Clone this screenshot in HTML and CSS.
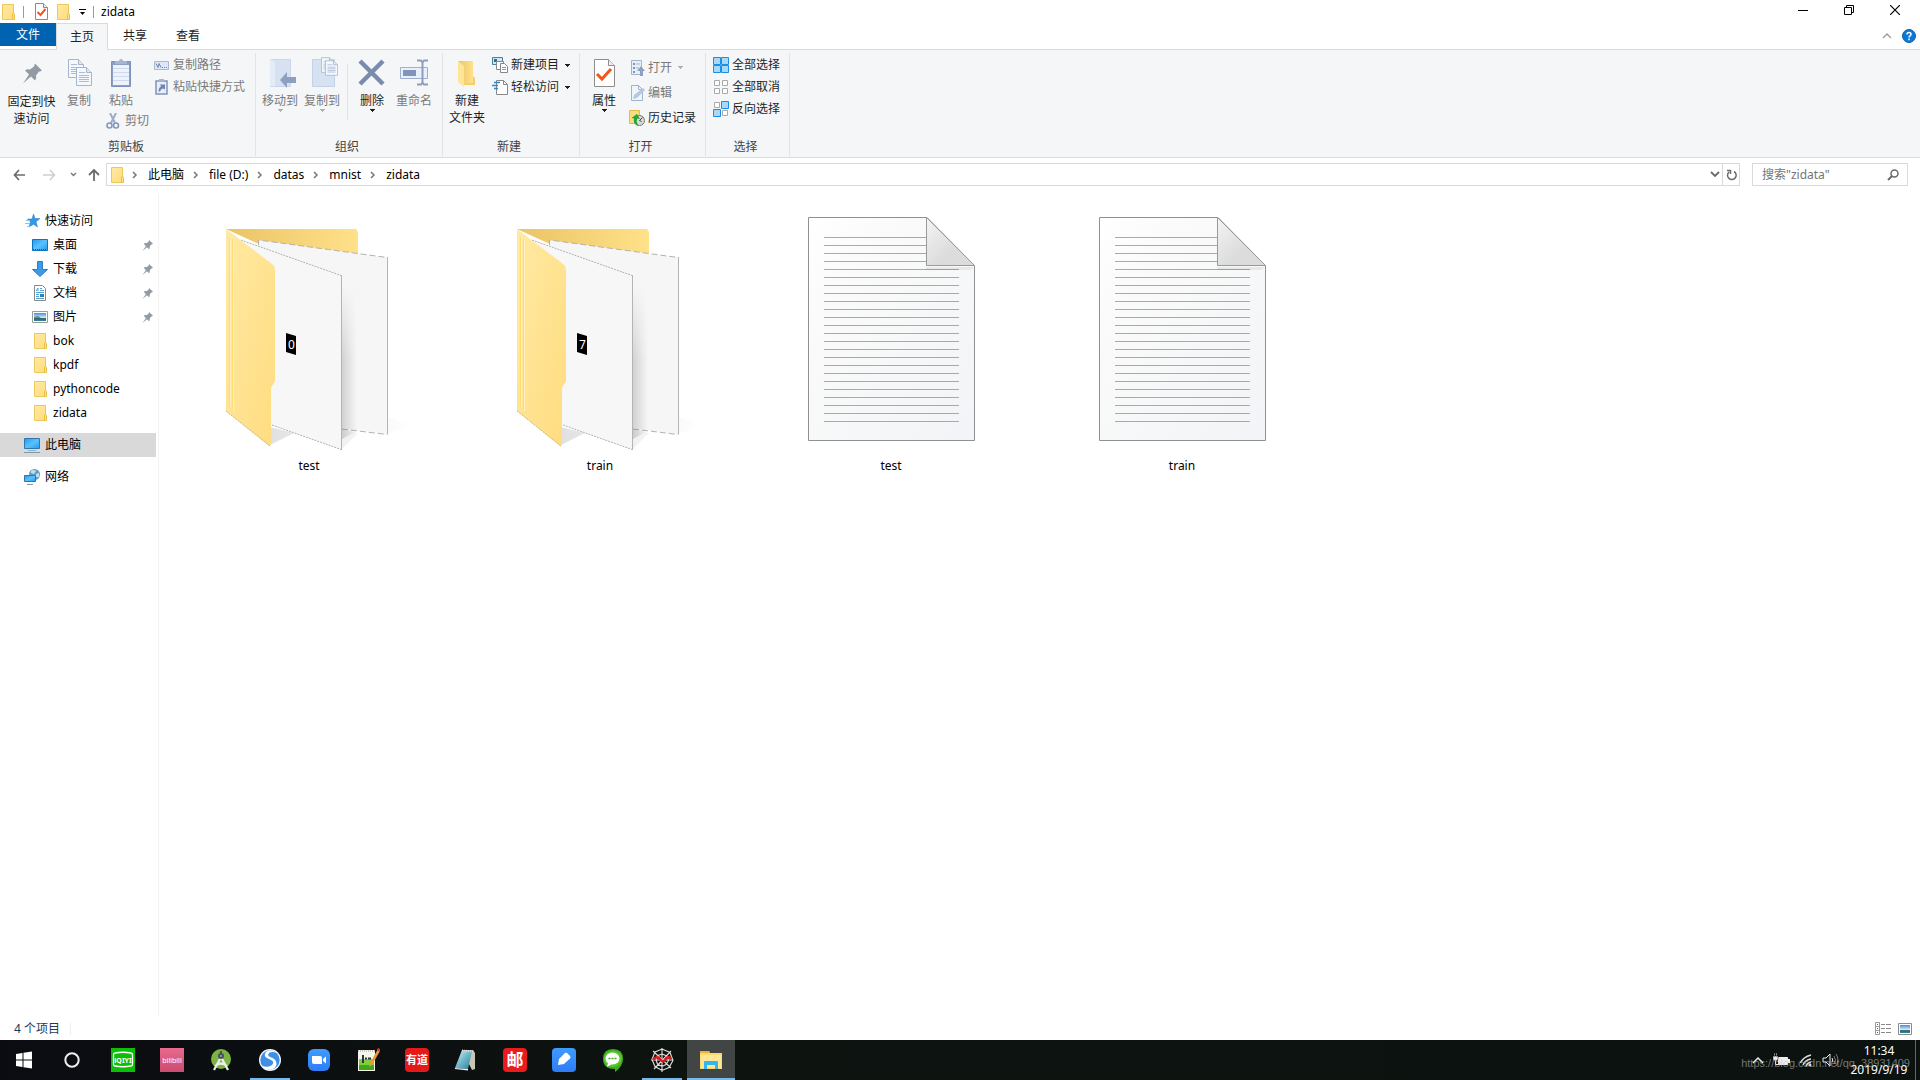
FILE: index.html
```html
<!DOCTYPE html>
<html lang="zh-CN">
    <head>
        <meta charset="utf-8">
        <title>zidata</title>
        <link rel="stylesheet" href="styles.css">
    </head>
    <body>

        <!--Shared icons-->
        <svg class="defs" width="0" height="0">
            <defs>
                <linearGradient id="gFolder" x1="0" y1="0" x2="1" y2="1"><stop offset="0" stop-color="#ffe9a3"/><stop offset="1" stop-color="#ffdd80"/></linearGradient>
                <linearGradient id="gBack" x1="0" y1="0" x2="1" y2="0"><stop offset="0" stop-color="#eac465"/><stop offset="1" stop-color="#ffe18a"/></linearGradient>
                <linearGradient id="gDoc" x1="0" y1="0" x2="1" y2="1"><stop offset="0" stop-color="#ffffff"/><stop offset="0.3" stop-color="#f9faf9"/><stop offset="1" stop-color="#f3f4f7"/></linearGradient>
                <linearGradient id="gFold" x1="0" y1="0" x2="1" y2="1"><stop offset="0" stop-color="#f4f4f4"/><stop offset="0.6" stop-color="#dcdcdc"/></linearGradient>
                <linearGradient id="gShade" x1="0" y1="0" x2="1" y2="0"><stop offset="0" stop-color="#000" stop-opacity="0.15"/><stop offset="1" stop-color="#000" stop-opacity="0"/></linearGradient>
                <linearGradient id="gShadeDown" x1="0" y1="0" x2="0" y2="1"><stop offset="0" stop-color="#f6f6f6"/><stop offset="1" stop-color="#f6f6f6" stop-opacity="0"/></linearGradient>
                <linearGradient id="gFloor" x1="0" y1="0" x2="1" y2="0"><stop offset="0" stop-color="#000" stop-opacity="0.12"/><stop offset="1" stop-color="#000" stop-opacity="0"/></linearGradient>
                <linearGradient id="gBlue" x1="0" y1="0" x2="1" y2="1"><stop offset="0" stop-color="#1e9bf5"/><stop offset="0.5" stop-color="#5cc1fb"/><stop offset="1" stop-color="#1e9bf5"/></linearGradient>
                <linearGradient id="gPic" x1="0" y1="0" x2="0" y2="1"><stop offset="0" stop-color="#4b8bdc"/><stop offset="0.6" stop-color="#d5eefa"/><stop offset="0.7" stop-color="#2c5f66"/><stop offset="1" stop-color="#3c8aa0"/></linearGradient>
                <linearGradient id="gBili" x1="0" y1="0" x2="0" y2="1"><stop offset="0" stop-color="#e86a8c"/><stop offset="1" stop-color="#cc4b70"/></linearGradient>
                <linearGradient id="gApp" x1="0" y1="0" x2="0" y2="1"><stop offset="0" stop-color="#3f9bff"/><stop offset="1" stop-color="#2f7cf6"/></linearGradient>
                <linearGradient id="gNote" x1="0" y1="0" x2="1" y2="1"><stop offset="0" stop-color="#e3f6fa"/><stop offset="0.5" stop-color="#6fb8cc"/><stop offset="1" stop-color="#2c7c94"/></linearGradient>
                <pattern id="ruled" x="0" y="36" width="8" height="8" patternUnits="userSpaceOnUse"><rect width="8" height="1" fill="#a9a9a9"/></pattern>

                <symbol id="folder" viewBox="0 0 16 16">
                    <path d="M1.5 0.5h11v15h-11z" fill="url(#gFolder)" stroke="#ecc858"/>
                    <path d="M11.5 10.5q0-1 1-1t1 1v5h-2z" fill="#ffe28d" stroke="#e9bf45"/>
                </symbol>
                <symbol id="checkdoc" viewBox="0 0 13 17">
                    <path d="M0.5 0.5h8l4 4v12h-12z" fill="#fff" stroke="#8a8a8a"/><path d="M8.5 0.5v4h4" fill="#eee" stroke="#8a8a8a"/>
                    <path d="M2.5 9l3 3 5-6" fill="none" stroke="#f0581b" stroke-width="2"/>
                </symbol>
                <symbol id="pin" viewBox="0 0 20 20">
                    <path d="M13 0l7 7-2 1-1 0-3 4q1 3-1 5l-4-4-8 7 6-9-4-4q2-2 5-1l4-3z" fill="#929ba3"/>
                </symbol>
                <symbol id="caret" viewBox="0 0 5 3"><path d="M0 0h5v1h-1v1h-1v1h-1v-1h-1v-1h-1z" fill="currentColor"/></symbol>
                <symbol id="chev" viewBox="0 0 6 8"><path d="M1 1l3 3-3 3" fill="none" stroke="#777" stroke-width="1.5"/></symbol>
                <symbol id="page" viewBox="0 0 16 19">
                    <path d="M0.5 0.5h10l5 5v13h-15z" fill="#f4f8fd" stroke="#a5b5cd"/><path d="M10.5 0.5v5h5" fill="#dce6f3" stroke="#a5b5cd"/>
                    <path d="M3 5.5h6M3 8.5h10M3 10.5h10M3 12.5h10M3 14.5h10" stroke="#a9bddb"/>
                </symbol>
                <symbol id="bigFolder" viewBox="0 0 256 256">
                    <path d="M206 216l24 8-24 9zM89 226l24 6-24 12zM161 228l16 4-16 16z" fill="url(#gFloor)"/>
                    <path d="M45 28h130l2 3v30h-60z" fill="url(#gBack)"/>
                    <path d="M77 39L206.5 56.5v177L161 227 77 215z" fill="#f6f6f6"/>
                    <path d="M77.5 44v-5L206 56.5M161 228l45 5.5" fill="none" stroke="#b2b2b2" stroke-dasharray="6 3"/>
                    <path d="M206.5 56v177.5" stroke="#b4b4b4"/>
                    <path d="M161 85l15 3v142l-15 8z" fill="url(#gShade)"/>
                    <path d="M161 85h16v75h-16z" fill="url(#gShadeDown)"/>
                    <path d="M60 39l100.500 35.500v174L91 224 60 200z" fill="#f7f7f7"/>
                    <path d="M60 39l100 35.500M91 224l69 24.500" fill="none" stroke="#b2b2b2" stroke-dasharray="2 1"/>
                    <path d="M160.5 74v175" stroke="#b4b4b4"/>
                    <path d="M45 28l46 35q3 2 3 6v111l-4 7v55q0 3-2 3L45 210z" fill="url(#gFolder)"/>
                    <path d="M48.5 36v170M51.5 38v171" stroke="#ffdc73"/><path d="M49.5 36v171M52.5 39v171" stroke="#fff0bd"/>
                    <path d="M45 210l44 35" stroke="#c9b98d" stroke-dasharray="2 1"/>
                    <path d="M105 132l10 3v19l-10-3z" fill="#000"/>
                </symbol>
                <symbol id="bigDoc" viewBox="0 0 256 256">
                    <path d="M45.5 16.5H164L211.5 64.5v175h-166z" fill="url(#gDoc)" stroke="#909090"/>
                    <path d="M61 36h103v30h32v155H61z" fill="url(#ruled)"/>
                    <path d="M163 66h48l-3 3h-45z" fill="#000" opacity="0.06"/>
                    <path d="M163.5 16.5v48h48z" fill="url(#gFold)" stroke="#9a9a9a"/>
                </symbol>
                <symbol id="picture" viewBox="0 0 16 12">
                    <path d="M0.5 0.5h15v11h-15z" fill="#fff" stroke="#9b9b9b"/><path d="M2 2h12v8h-12z" fill="url(#gPic)"/><path d="M2 6l4-1 3 2 5 0v1H2z" fill="#2f6b62" opacity="0.7"/>
                </symbol>
                <symbol id="monitor" viewBox="0 0 16 16">
                    <path d="M0.5 1.5h15v10h-15z" fill="url(#gBlue)" stroke="#2d79ae"/><path d="M4 13.5h8" stroke="#9fb4c2"/><path d="M0 15.5h16" stroke="#7d98aa"/>
                </symbol>
            </defs>
        </svg>

        <div class="window">

        <!--Title bar-->
        <header class="titlebar">
            <svg class="i16" viewBox="0 0 16 16"><use href="#folder"/></svg>
            <span class="bar"></span>
            <button class="plain" aria-label="属性"><svg width="13" height="17"><use href="#checkdoc"/></svg></button>
            <button class="plain quick" aria-label="新建文件夹"><svg class="i16"><use href="#folder"/></svg></button>
            <button class="plain" aria-label="自定义"><svg width="9" height="6" viewBox="0 0 9 6"><path d="M1 0.5h7" stroke="#000"/><path d="M2 3h5l-2.5 3z"/></svg></button>
            <span class="bar last"></span>
            <span class="title">zidata</span>
            <div class="winbtns">
                <button class="plain" aria-label="最小化"><svg width="10" height="10"><path d="M0 5.5h10" stroke="#000"/></svg></button>
                <button class="plain" aria-label="还原"><svg width="10" height="10"><path d="M0.5 2.5h7v7h-7zM2.5 2.5v-2h7v7h-2" fill="none" stroke="#000"/></svg></button>
                <button class="plain" aria-label="关闭"><svg width="10" height="10"><path d="M0 0l10 10M10 0L0 10" stroke="#000" stroke-width="1.2"/></svg></button>
            </div>
        </header>

        <!--Tabs-->
        <nav class="tabs">
            <button class="tab file">文件</button>
            <button class="tab active">主页</button>
            <button class="tab">共享</button>
            <button class="tab">查看</button>
            <div class="help">
                <button class="plain" aria-label="收起"><svg width="10" height="6"><path d="M1 5l4-4 4 4" fill="none" stroke="#999" stroke-width="1.3"/></svg></button>
                <button class="plain" aria-label="帮助"><svg width="14" height="14" viewBox="0 0 14 14"><circle cx="7" cy="7" r="6.5" fill="#0a78d7" stroke="#1560a8"/><path d="M5 5.5q0-2 2-2t2 1.8q0 1-1 1.5t-1 1.7M7 9.6v1.6" fill="none" stroke="#fff" stroke-width="1.5"/></svg></button>
            </div>
        </nav>

        <!--Ribbon-->
        <section class="ribbon">
            <div class="group clip">
                <div class="tools">
                    <button class="big wide"><svg viewBox="0 0 32 32"><use href="#pin" x="6" y="5" width="20" height="21"/></svg>固定到快<br>速访问</button>
                    <button class="big" disabled><svg viewBox="0 0 32 32"><use href="#page" x="5" y="2" width="16" height="19"/><use href="#page" x="13" y="10" width="16" height="19"/></svg>复制</button>
                    <div class="stack">
                        <button class="big" disabled><svg viewBox="0 0 32 32"><path d="M6.5 4.5h19v25h-19z" fill="#8b9fc5" stroke="#7d92ba"/><path d="M8 8h16v20H8z" fill="#eef3fb"/><path d="M8 11.5h16M8 15.5h16M8 19.5h16M8 23.5h16" stroke="#cfdaec"/><path d="M10 7V4h4q0-2 2-2t2 2h4v3z" fill="#a6b5d1"/></svg>粘贴</button>
                        <button class="small" disabled><svg class="i16" viewBox="0 0 16 16"><path d="M4 0l5 10M10 0L5 10" stroke="#9dadc8" stroke-width="2" fill="none"/><circle cx="3.5" cy="12.5" r="2.5" fill="none" stroke="#8498bd" stroke-width="1.6"/><circle cx="10" cy="12.5" r="2.5" fill="none" stroke="#8498bd" stroke-width="1.6"/></svg>剪切</button>
                    </div>
                    <div class="list">
                        <button class="small" disabled><svg class="i16" viewBox="0 0 16 16"><path d="M0.5 4.5h14v8h-14z" fill="#dde7f5" stroke="#a9b9d2"/><path d="M2 6.5l2 4 1-4 2 4M8 10.5h1M10 10.5h1M12 10.5h1" fill="none" stroke="#6f86b0"/></svg>复制路径</button>
                        <button class="small" disabled><svg class="i16" viewBox="0 0 16 16"><path d="M2 2h11v13H2z" fill="#e8eef8" stroke="#7f94bb" stroke-width="1.5"/><path d="M5 3V0h5v3z" fill="#a6b5d1"/><path d="M4.500 12.500q0-4 2.500-5l-1-2h5v5l-2-1q-2 0-3 3z" fill="#6f86b0"/></svg>粘贴快捷方式</button>
                    </div>
                </div>
                <div class="caption">剪贴板</div>
            </div>

            <div class="group">
                <div class="tools">
                    <button class="big" disabled><svg viewBox="0 0 32 32"><path d="M6.5 2.5h20v27h-20z" fill="#d6e1f1" stroke="#cbd7e9"/><path d="M6 2l5 3v24H6z" fill="#e4ecf7"/><path d="M16 23l7-8v5h9v6h-9v5z" fill="#8ea0c0"/></svg>移动到<svg class="drop"><use href="#caret"/></svg></button>
                    <button class="big" disabled><svg viewBox="0 0 32 32"><path d="M6.5 2.5h22v27h-22z" fill="#d6e1f1" stroke="#c5d2e6"/><use href="#page" x="15" y="0" width="13" height="16"/><use href="#page" x="19" y="3" width="13" height="16"/></svg>复制到<svg class="drop"><use href="#caret"/></svg></button>
                    <span class="split"></span>
                    <button class="big"><svg viewBox="0 0 32 32"><path d="M4 4l23 23M27 4L4 27" stroke="#7a8cae" stroke-width="4.5"/></svg>删除<svg class="drop"><use href="#caret"/></svg></button>
                    <button class="big" disabled><svg viewBox="0 0 32 32"><path d="M2.5 10.5h27v11h-27z" fill="#eaf0f9" stroke="#9db0cf"/><path d="M5 13h13v6H5z" fill="#8094b9"/><path d="M19 3.500h4l1.500 2v20l-1.500 2h-4M30 3.500h-4l-1.500 2v20l1.500 2h4" fill="none" stroke="#8b9dbe" stroke-width="2"/></svg>重命名</button>
                </div>
                <div class="caption">组织</div>
            </div>

            <div class="group">
                <div class="tools">
                    <button class="big"><svg viewBox="0 0 32 32"><path d="M7 4h15v15l2 2v7H12z" fill="#f3cf6a"/><path d="M7 4h15v22l-10 1z" fill="url(#gBack)"/><path d="M7 4l6 5v21l-6-5z" fill="#ffe598"/></svg>新建<br>文件夹</button>
                    <div class="list">
                        <button class="small"><svg class="i16" viewBox="0 0 16 16"><path d="M0.5 0.5h10v7h-10z" fill="#cfe6f5" stroke="#4c7f9e"/><path d="M2 2h3v3H2z" fill="#2d6f97"/><path d="M4.5 4.5h7v8h-7z" fill="#fff" stroke="#888"/><path d="M8.5 6.5h4l3 3v6h-7z" fill="#fff" stroke="#888"/><path d="M10 10.5h4M10 12.5h4" stroke="#d87a7a"/></svg>新建项目<svg class="drop after"><use href="#caret"/></svg></button>
                        <button class="small"><svg class="i16" viewBox="0 0 16 16"><path d="M4.5 1.500h7l4 4v10h-11z" fill="#fff" stroke="#888"/><path d="M11.5 1.500v4h4" fill="none" stroke="#888"/><path d="M2 3.500h6M0 6.500h6M2 9.500h4" stroke="#2f86c8" stroke-width="1.5"/></svg>轻松访问<svg class="drop after"><use href="#caret"/></svg></button>
                    </div>
                </div>
                <div class="caption">新建</div>
            </div>

            <div class="group">
                <div class="tools">
                    <button class="big"><svg viewBox="0 0 32 32"><path d="M6.5 2.5h14l6 6v21h-20z" fill="#fff" stroke="#8d8d8d"/><path d="M20.5 2.5v6h6" fill="#eee" stroke="#8d8d8d"/><path d="M9 17l5 5 9-10" fill="none" stroke="#f0581b" stroke-width="3"/></svg>属性<svg class="drop"><use href="#caret"/></svg></button>
                    <div class="list loose">
                        <button class="small" disabled><svg class="i16" viewBox="0 0 16 16"><path d="M2.5 0.5h10v14h-10z" fill="#e8eff8" stroke="#a3b3cc"/><path d="M4 3h2v2H4zM4 7h2v2H4zM4 11h2v2H4z" fill="#7f95bb"/><path d="M7 4h4M7 8h3" stroke="#a3b3cc"/><path d="M11 16v-5H8l4-5 4 5h-2v5z" fill="#8ea0c0"/></svg>打开<svg class="drop after"><use href="#caret"/></svg></button>
                        <button class="small" disabled><svg class="i16" viewBox="0 0 16 16"><path d="M2.5 0.5h7l4 4v11h-11z" fill="#f0f5fb" stroke="#a3b3cc"/><path d="M9.5 0.5v4h4" fill="none" stroke="#a3b3cc"/><path d="M4 14l1-4 9-7 2 2-8 8z" fill="#b6c7e0"/></svg>编辑</button>
                        <button class="small"><svg class="i16" viewBox="0 0 16 16"><path d="M0.500 0.500h10v13h-10z" fill="#fbdc7c" stroke="#e3bb4c"/><circle cx="10.5" cy="10.5" r="5" fill="#d9d9d9" stroke="#777"/><path d="M10.500 10.500l3-3M10.500 10.500l2 1" fill="none" stroke="#444"/><path d="M8 15.500q-4-2-3-7L2.500 8 8 4l3 5-2.500-.5q-2 3 1 7z" fill="#27a536"/></svg>历史记录</button>
                    </div>
                </div>
                <div class="caption">打开</div>
            </div>

            <div class="group">
                <div class="tools">
                    <div class="list">
                        <button class="small"><svg class="i16" viewBox="0 0 16 16"><path d="M0.5 0.5h7v7h-7zM8.5 0.5h7v7h-7zM0.5 8.5h7v7h-7zM8.5 8.5h7v7h-7z" fill="#a8d8f8" stroke="#1e8fe0"/></svg>全部选择</button>
                        <button class="small"><svg class="i16" viewBox="0 0 16 16"><path d="M1.5 1.5h5v5h-5zM9.5 1.5h5v5h-5zM1.5 9.5h5v5h-5zM9.5 9.5h5v5h-5z" fill="#fff" stroke="#aaa"/></svg>全部取消</button>
                        <button class="small"><svg class="i16" viewBox="0 0 16 16"><path d="M1.5 1.5h5v5h-5zM9.5 9.5h5v5h-5z" fill="#fff" stroke="#aaa"/><path d="M8.5 0.5h7v7h-7zM0.5 8.5h7v7h-7z" fill="#a8d8f8" stroke="#1e8fe0"/></svg>反向选择</button>
                    </div>
                </div>
                <div class="caption">选择</div>
            </div>
        </section>

        <!--Address row-->
        <div class="address">
            <button class="plain arrow" aria-label="后退"><svg width="13" height="12"><path d="M12 6H1.5M6 1L1.5 6 6 11" fill="none" stroke="#6b6b6b" stroke-width="1.7"/></svg></button>
            <button class="plain arrow" aria-label="前进" disabled><svg width="13" height="12"><path d="M0 6h11.5M7 1l4.5 5L7 11" fill="none" stroke="#cfcfcf" stroke-width="1.5"/></svg></button>
            <button class="plain recent" aria-label="最近"><svg width="7" height="5"><path d="M1 1l2.5 2.5L6 1" fill="none" stroke="#777" stroke-width="1.4"/></svg></button>
            <button class="plain up" aria-label="上移"><svg width="12" height="13"><path d="M6 13V2M1 7l5-5 5 5" fill="none" stroke="#6b6b6b" stroke-width="1.8"/></svg></button>
            <div class="path">
                <svg class="i16 here"><use href="#folder"/></svg>
                <svg class="chev"><use href="#chev"/></svg><a href="#">此电脑</a>
                <svg class="chev"><use href="#chev"/></svg><a href="#">file (D:)</a>
                <svg class="chev"><use href="#chev"/></svg><a href="#">datas</a>
                <svg class="chev"><use href="#chev"/></svg><a href="#">mnist</a>
                <svg class="chev"><use href="#chev"/></svg><a href="#">zidata</a>
                <button class="plain history" aria-label="以前的位置"><svg width="10" height="7"><path d="M1 1l4 4 4-4" fill="none" stroke="#6b6b6b" stroke-width="1.8"/></svg></button>
                <button class="plain refresh" aria-label="刷新"><svg width="11" height="12"><path d="M8 2.5A4.3 4.3 0 1 1 3 3M1 1.5h3.5V5" fill="none" stroke="#6b6b6b" stroke-width="1.5"/></svg></button>
            </div>
            <label class="search">
                <input type="search" aria-label="搜索" placeholder='搜索"zidata"'>
                <svg width="12" height="12"><circle cx="7.5" cy="4.5" r="3.5" fill="none" stroke="#6b6b6b" stroke-width="1.5"/><path d="M5 7L1 11" stroke="#6b6b6b" stroke-width="2"/></svg>
            </label>
        </div>

        <!--Sidebar and files-->
        <main class="content">
            <nav class="side">
                <a class="top" href="#"><svg class="i16" viewBox="0 0 16 16"><path d="M9.500 1l1.500 4.500h5L12 8.700 13.500 14 9.500 11.300 5 14l1.500-5L3.500 6h4.500z" fill="#2d9be8" stroke="#2279ba" stroke-width="0.500"/><path d="M2 7.500h4M1 10.500h5M3 13.500h3" stroke="#7fc4f2"/></svg>快速访问</a>
                <a href="#"><svg class="i16" viewBox="0 0 16 16"><path d="M0.5 2.5h15v11h-15z" fill="url(#gBlue)" stroke="#1173b9"/><path d="M1 12.5h14" stroke="#1b5d8e" stroke-dasharray="1 1"/></svg>桌面<svg class="pin"><use href="#pin"/></svg></a>
                <a href="#"><svg class="i16" viewBox="0 0 16 16"><path d="M5.5 0.5h5v8h5L8 15.5 0.5 8.5h5z" fill="#3c9be8" stroke="#2f7dc2"/></svg>下载<svg class="pin"><use href="#pin"/></svg></a>
                <a href="#"><svg class="i16" viewBox="0 0 16 16"><path d="M2.5 0.5h8l3 3v12h-11z" fill="#fff" stroke="#888"/><path d="M4 6l2-3v3M8 3.5h2M8 5.5h4M4 7.5h8M4 13.5h8M4 9.5h3M4 11.5h3" fill="none" stroke="#4d9fd6"/><path d="M8 9h4v3H8z" fill="#3a7f9d"/></svg>文档<svg class="pin"><use href="#pin"/></svg></a>
                <a href="#"><svg class="i16"><use href="#picture"/></svg>图片<svg class="pin"><use href="#pin"/></svg></a>
                <a href="#"><svg class="i16"><use href="#folder" x="1"/></svg>bok</a>
                <a href="#"><svg class="i16"><use href="#folder" x="1"/></svg>kpdf</a>
                <a href="#"><svg class="i16"><use href="#folder" x="1"/></svg>pythoncode</a>
                <a href="#"><svg class="i16"><use href="#folder" x="1"/></svg>zidata</a>
                <a class="top selected" href="#"><svg class="i16"><use href="#monitor"/></svg>此电脑</a>
                <a class="top" href="#"><svg class="i16" viewBox="0 0 16 16"><circle cx="10.5" cy="5.5" r="5.5" fill="#5c9fc9"/><path d="M7 2q3-2 5 0l-2 3-3-1zM12 5l3-1v4h-3z" fill="#bfe0ef"/><path d="M0.5 6.5h11v6h-11z" fill="url(#gBlue)" stroke="#2d79ae"/><path d="M3 15.5h6" stroke="#7d98aa"/></svg>网络</a>
            </nav>

            <div class="files">
                <a class="item" href="#">
                    <svg viewBox="0 0 256 256"><use href="#bigFolder"/><text x="107" y="148" class="digit">0</text></svg>
                    test
                </a>
                <a class="item" href="#">
                    <svg viewBox="0 0 256 256"><use href="#bigFolder"/><text x="107" y="148" class="digit">7</text></svg>
                    train
                </a>
                <a class="item" href="#">
                    <svg viewBox="0 0 256 256"><use href="#bigDoc"/></svg>
                    test
                </a>
                <a class="item" href="#">
                    <svg viewBox="0 0 256 256"><use href="#bigDoc"/></svg>
                    train
                </a>
            </div>
        </main>

        <footer class="status">
            <span>4 个项目</span>
            <span class="tick"></span>
            <div class="views">
                <button class="plain" aria-label="详细信息"><svg width="16" height="13"><path d="M0.5 0.5h4v12h-4zM0.5 4.5h4M0.5 8.5h4" fill="#fff" stroke="#999"/><path d="M2 2.5h1M2 6.5h1M2 10.5h1" stroke="#b33"/><path d="M6 2.5h4M11 2.5h5M6 6.5h4M11 6.5h5M6 10.5h4M11 10.5h5" stroke="#888"/></svg></button>
                <button class="plain" aria-label="大图标"><svg width="14" height="12" viewBox="0 0 14 12"><path d="M0.500 0.500h13v11h-13z" fill="#fff" stroke="#8b8b8b"/><path d="M2 2h10v8H2z" fill="url(#gPic)"/></svg></button>
            </div>
        </footer>
        </div>

        <!--Taskbar-->
        <div class="taskbar">
            <button class="task" aria-label="开始"><svg viewBox="0 0 24 24"><path d="M4 6l6.500-1v6.500H4zM11.5 4.800L20 3.500v8h-8.500zM4 12.500h6.500V19L4 18zM11.5 12.500H20v8l-8.500-1.300z" fill="#fff"/></svg></button>
            <button class="task cortana" aria-label="搜索"><svg viewBox="0 0 24 24"><circle cx="12" cy="12" r="6.7" fill="none" stroke="#eee" stroke-width="2"/></svg></button>
            <button class="task"><svg viewBox="0 0 24 24"><path d="M0 0h24v24H0z" fill="#0bbe06"/><path d="M4 5q8-1.500 16 0 1.500 0 1.500 2v9q0 2-1.500 2-8 1.500-16 0-1.500 0-1.500-2v-9q0-2 1.500-2z" fill="none" stroke="#fff" stroke-width="1.3"/><text x="12" y="15" class="qiyi">iQIYI</text></svg></button>
            <button class="task"><svg viewBox="0 0 24 24"><path d="M0 0h24v24H0z" fill="url(#gBili)"/><text x="12" y="15" class="bili">bilibili</text></svg></button>
            <button class="task" aria-label="Android Studio"><svg viewBox="0 0 24 24"><circle cx="12" cy="11" r="10" fill="#7db343"/><path d="M12 9L5 22M12 9l7 13M6 18q6-5 12 0" fill="none" stroke="#eee" stroke-width="2.2"/><circle cx="12" cy="8" r="3" fill="#47525a"/><circle cx="12" cy="8" r="1" fill="#9ab"/><path d="M12 3v3" stroke="#47525a" stroke-width="2"/></svg></button>
            <button class="task open" aria-label="搜狗浏览器"><svg viewBox="0 0 24 24"><circle cx="12" cy="12" r="11" fill="#f4f8fc"/><circle cx="12" cy="12" r="9.7" fill="#3d8fe8"/><path d="M19 5q-7-5-11-1-3 4 1 6l4 2q4 2 1 5-3 3-10 1 4 5 10 3.500 6-3 4-8-1-3-6-4.500-3-1.500-1-4 3-2 8 0z" fill="#fff"/></svg></button>
            <button class="task" aria-label="视频会议"><svg viewBox="0 0 24 24"><rect x="1" y="1" width="22" height="22" rx="6" fill="url(#gApp)"/><path d="M5 8h8q2 0 2 2v6H7q-2 0-2-2zM16 11l3-2.500v7L16 13z" fill="#fff"/></svg></button>
            <button class="task" aria-label="Notepad++"><svg viewBox="0 0 24 24"><path d="M2 2h17v21H2z" fill="#f4f6ee"/><path d="M3 11h15v11H3z" fill="#7ccf3e"/><path d="M3 17h15v5H3z" fill="#45a51a"/><path d="M2 3h17" stroke="#999" stroke-dasharray="1 1"/><path d="M7 7v8" stroke="#333" stroke-width="2"/><path d="M9 10.500h2M12 10.500h3" stroke="#333" stroke-width="2"/><path d="M22 1l2 2-8 14-3 2 1-4z" fill="#e79a2f"/><path d="M22 0l2 1v3l-3-2z" fill="#c6443b"/></svg></button>
            <button class="task"><svg viewBox="0 0 24 24"><rect width="24" height="24" rx="4" fill="#e61919"/><text x="12" y="16" class="youdao">有道</text></svg></button>
            <button class="task" aria-label="记事本"><svg viewBox="0 0 24 24"><path d="M8 2h11l2 3v16l-3 1z" fill="#c9c4b4"/><path d="M8 2l10 1-4 18-13-1z" fill="url(#gNote)"/><path d="M1 20l13 1v1.500L1 21z" fill="#eef"/><path d="M8 2.500l11 1" stroke="#ddd" stroke-width="2" stroke-dasharray="1 1"/></svg></button>
            <button class="task"><svg viewBox="0 0 24 24"><rect width="24" height="24" rx="4" fill="#e91b1b"/><text x="12" y="18" class="mail">邮</text></svg></button>
            <button class="task" aria-label="笔记"><svg viewBox="0 0 24 24"><rect width="24" height="24" rx="4" fill="url(#gApp)"/><path d="M6 17l1-6 6-6q1-.5 2 0l3 3q1 1 0 2.500l-6 5.500z" fill="#fff"/></svg></button>
            <button class="task" aria-label="聊天"><svg viewBox="0 0 24 24"><path d="M12 1q10 0 10 10 0 7-8 13l0-3Q2 21 2 11 2 1 12 1z" fill="#3fae1e"/><path d="M12 3q8 0 9 7-1 9-10 9Q3 18 3 11q1-8 9-8z" fill="#59c531"/><ellipse cx="11.5" cy="10.5" rx="7" ry="6" fill="#fff"/><path d="M7 15l-1 4 5-3z" fill="#fff"/><path d="M7.5 10.500h2M10.5 10.500h2M13.5 10.500h2" stroke="#3fae1e" stroke-width="1.6"/></svg></button>
            <button class="task open" aria-label="Spyder"><svg viewBox="0 0 24 24"><path d="M12 1l8 3.500 3 8-4 7-7 3-7-4-3-7 3-7.500zM12 6l5 2 1.500 4.500-2.500 4-4 2-4.500-2.500L6 12l2-4.500zM12 0v24M3 3l18 17M1 12h22M4 21L21 3" fill="none" stroke="#ddd" stroke-width="1.1"/><path d="M3 12q4-5 7-1 3 4 5 1 2-4 6-2" fill="none" stroke="#e01a1a" stroke-width="2.6"/></svg></button>
            <button class="task open current" aria-label="文件资源管理器"><svg viewBox="0 0 24 24"><path d="M1 3h9l1 2h12v16H1z" fill="#fbd96f"/><path d="M2 7h20v13H2z" fill="#ffe694"/><path d="M1 3h9l1 2H1z" fill="#e8b339"/><path d="M5 21v-7q0-1 1-1h12q1 0 1 1v7h-3v-4H8v4z" fill="#35b4ee"/></svg></button>

            <div class="tray">
                <svg width="12" height="8"><path d="M1 7l5-5 5 5" fill="none" stroke="#eee" stroke-width="1.5"/></svg>
                <svg width="17" height="14"><path d="M5.500 4.500h9v7h-9z" fill="#eee" stroke="#eee"/><path d="M15 6h2v4h-2z" fill="#eee"/><path d="M0 3h5v3q0 2-2.500 2T0 6zM1 0h1v3H1zM3 0h1v3H3z" fill="#eee" stroke="#0c120f" stroke-width="0.500"/><path d="M2.500 8v3.500h3" stroke="#eee" fill="none"/></svg>
                <svg width="14" height="13"><path d="M1.5 9Q4 3 12 1M4 11q2-5 8-6M7 12q1-3 5-4" fill="none" stroke="#ddd" stroke-width="1.5"/><circle cx="11" cy="11" r="1.5" fill="#ddd"/></svg>
                <svg width="17" height="14"><path d="M1 5h3l4-4v12L4 9H1z" fill="none" stroke="#eee"/><path d="M10 5q1.5 2 0 4" fill="none" stroke="#eee"/><path d="M12 3q3 4 0 8M14 1q4 6 0 12" fill="none" stroke="#777"/></svg>
                <div class="clock">11:34<br>2019/9/19</div>
                <span class="peek"></span>
                <div class="mark">https://blog.csdn.net/qq_38931409</div>
            </div>
        </div>
    </body>
</html>
```

FILE: styles.css
```css
* {
box-sizing: border-box;
}

body {
margin: 0;
height: 100vh;
display: flex;
flex-direction: column;
background: white;
color: #000;
font-family: "Noto Sans", "Noto Sans CJK SC", sans-serif;
font-size: 12px;
line-height: 18px;
overflow: hidden;
}

.defs {
position: absolute;
}

svg {
display: block;
flex: none;
}

button {
font: inherit;
color: inherit;
border: 0;
background: none;
padding: 0;
}

a {
color: inherit;
text-decoration: none;
}

.plain {
display: flex;
align-items: center;
justify-content: center;
}

.i16 {
width: 16px;
height: 16px;
}

.window {
flex: 1;
display: flex;
flex-direction: column;
min-height: 0;
}

/* title bar */
.titlebar {
display: flex;
align-items: center;
height: 23px;
padding-left: 1px;
}

.bar {
width: 1px;
height: 12px;
background: #999;
margin: 0 11px 0 6px;
}

.bar.last {
margin: 0 7px 0 6px;
}

.quick {
margin: 0 6px 0 8px;
}

.winbtns {
display: flex;
align-self: flex-start;
margin-left: auto;
margin-right: 2px;
}

.winbtns button {
width: 46px;
height: 20px;
}

/* tabs */
.tabs {
display: flex;
height: 26px;
}

.tab {
width: 52px;
height: 26px;
margin-right: 1px;
color: #222;
}

.tab.file {
width: 56px;
height: 23px;
margin: 0;
background: #0063b1;
color: white;
}

.tab.active {
height: 27px;
border: 1px solid #dadbdc;
border-bottom: 0;
background: #f5f6f7;
z-index: 1;
}

.help {
display: flex;
gap: 10px;
margin-left: auto;
padding-right: 4px;
}

/* ribbon */
.ribbon {
display: flex;
height: 109px;
padding: 3px 0 1px;
background: #f5f6f7;
border-top: 1px solid #dadbdc;
border-bottom: 1px solid #dadbdc;
}

.group {
display: flex;
flex-direction: column;
padding: 0 7px 0 3px;
border-right: 1px solid #e2e3e4;
}

.group.clip {
padding: 0 8px 0 5px;
}

.tools {
display: flex;
height: 85px;
padding-top: 1px;
}

.caption {
text-align: center;
color: #444;
}

.big {
display: flex;
flex-direction: column;
align-items: center;
justify-content: flex-start;
width: 42px;
height: 78px;
padding-top: 3px;
line-height: 17px;
white-space: nowrap;
color: #1e1e1e;
}

.big.wide {
display: block;
width: 53px;
height: 73px;
}

.big svg {
width: 32px;
height: 32px;
margin: 0 auto 3px;
}

.big .drop, .drop {
width: 5px;
height: 3px;
margin: 0 auto;
}

.drop.after {
margin: 0 0 0 3px;
}

.big:disabled .drop, .small:disabled .drop {
color: #b0b0b0;
}

.stack {
width: 50px;
}

.stack .big {
height: 57px;
}

.list {
margin-left: 4px;
padding-right: 2px;
}

.small {
display: flex;
align-items: center;
gap: 3px;
height: 22px;
white-space: nowrap;
color: #1e1e1e;
}

.big:disabled, .small:disabled {
color: #7a7a7a;
}

.stack .small {
height: 20px;
margin-left: 6px;
}

.loose {
padding-top: 1px;
}

.loose .small {
height: 25px;
}

.split {
width: 1px;
height: 56px;
margin: 10px 3px 0 4px;
background: #dfe0e1;
}

/* address row */
.address {
display: flex;
align-items: center;
height: 33px;
padding: 0 12px 0 13px;
}

.arrow {
width: 13px;
margin-right: 17px;
}

.arrow:disabled {
margin-right: 13px;
}

.recent {
width: 9px;
margin-right: 10px;
}

.up {
margin-right: 6px;
}

.path {
flex: 1;
display: flex;
align-items: center;
height: 23px;
padding-left: 3px;
border: 1px solid #d9d9d9;
}

.here {
margin-right: -3px;
}

.chev {
width: 6px;
height: 8px;
margin: 0 10px 0 9px;
}

.history {
margin-left: auto;
margin-right: 2px;
}

.refresh {
width: 17px;
height: 21px;
border-left: 1px solid #d9d9d9;
}

.search {
display: flex;
align-items: center;
width: 156px;
height: 23px;
margin-left: 12px;
padding: 0 8px 0 9px;
border: 1px solid #d9d9d9;
}

.search input {
flex: 1;
min-width: 0;
padding: 0;
border: 0;
outline: 0;
font: inherit;
}

.search input::placeholder {
color: #757575;
}

/* sidebar and files */
.content {
flex: 1;
display: flex;
min-height: 0;
padding-top: 3px;
}

.side {
width: 159px;
padding-top: 15px;
border-right: 1px solid #f3f3f3;
}

.side a {
display: flex;
align-items: center;
gap: 5px;
height: 24px;
margin-right: 2px;
padding-left: 32px;
}

.side .top {
padding-left: 24px;
}

.side .selected {
margin-top: 8px;
margin-bottom: 8px;
background: #d9d9d9;
}

.pin {
width: 11px;
height: 11px;
margin-left: auto;
margin-right: 3px;
}

.files {
flex: 1;
display: flex;
flex-wrap: wrap;
align-content: flex-start;
gap: 1px;
padding: 7px 0 0 5px;
}

.item {
width: 290px;
text-align: center;
}

.item svg {
width: 256px;
height: 256px;
margin: 0 auto;
}

.digit {
font-size: 12px;
fill: white;
}

/* status bar */
.status {
display: flex;
align-items: center;
height: 24px;
padding: 1px 8px 0 14px;
color: #1e395b;
}

.tick {
width: 1px;
height: 12px;
margin-left: 10px;
background: #eee;
}

.views {
display: flex;
gap: 7px;
margin-left: auto;
}

/* taskbar */
.taskbar {
display: flex;
gap: 1px;
height: 40px;
background: linear-gradient(to right, #0b0c12, #0d130f 35%, #0c120f);
}

.task {
width: 48px;
height: 40px;
}

.task svg {
width: 24px;
height: 24px;
margin: 0 auto;
}

.cortana {
margin-left: -1px;
margin-right: 2px;
}

.task.open {
background: linear-gradient(#76b9ed, #76b9ed) center bottom / 40px 2px no-repeat;
}

.task.current {
background: linear-gradient(#76b9ed, #76b9ed) center bottom / 48px 2px no-repeat #414544;
}

.qiyi, .bili, .youdao, .mail {
text-anchor: middle;
fill: white;
font-weight: bold;
}

.qiyi {
font-size: 7px;
}

.bili {
font-size: 7px;
font-weight: normal;
}

.youdao {
font-size: 11px;
}

.mail {
font-size: 17px;
}

.tray {
position: relative;
display: flex;
align-items: center;
gap: 9px;
margin-left: auto;
padding-right: 4px;
}

.clock {
width: 70px;
margin-left: -4px;
text-align: center;
line-height: 19px;
color: white;
}

.peek {
width: 1px;
height: 40px;
margin-left: -8px;
background: #666;
}

.mark {
position: absolute;
right: 10px;
top: 15px;
font-family: "Liberation Sans", sans-serif;
font-size: 11px;
line-height: 16px;
color: rgba(190, 190, 190, 0.6);
}
```
